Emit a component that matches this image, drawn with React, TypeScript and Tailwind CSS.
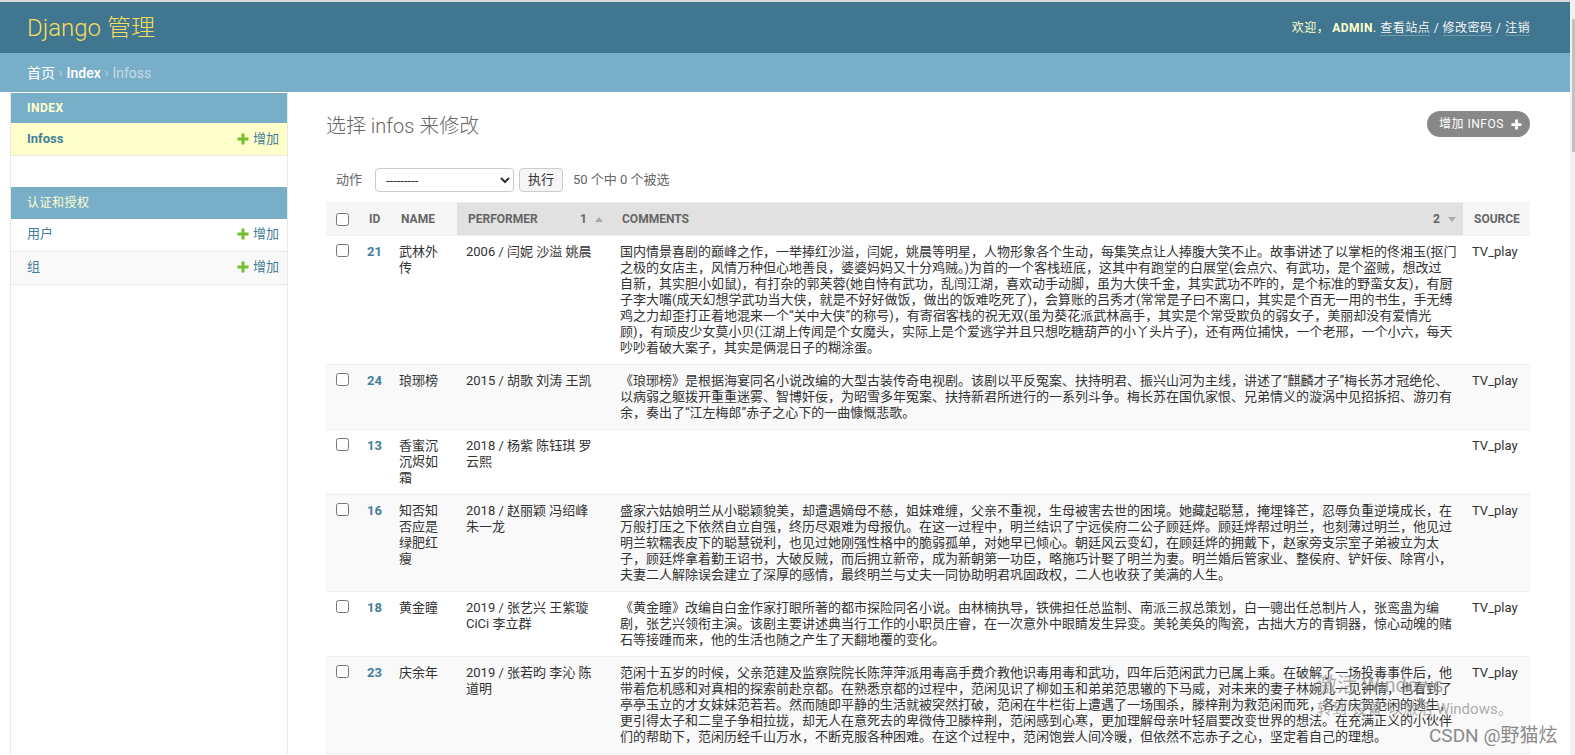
const shows = [
  {
    id: 21,
    name: '武林外传',
    performer: '2006 / 闫妮 沙溢 姚晨',
    comments: [
      '国内情景喜剧的巅峰之作，一举捧红沙溢，闫妮，姚晨等明星，人物形象各个生动，每集笑点让人捧腹大笑不止。故事讲述了以掌柜的佟湘玉(抠门',
      '之极的女店主，风情万种但心地善良，婆婆妈妈又十分鸡贼。)为首的一个客栈班底，这其中有跑堂的白展堂(会点穴、有武功，是个盗贼，想改过',
      '自新，其实胆小如鼠)，有打杂的郭芙蓉(她自恃有武功，乱闯江湖，喜欢动手动脚，虽为大侠千金，其实武功不咋的，是个标准的野蛮女友)，有厨',
      '子李大嘴(成天幻想学武功当大侠，就是不好好做饭，做出的饭难吃死了)，会算账的吕秀才(常常是子曰不离口，其实是个百无一用的书生，手无缚',
      '鸡之力却歪打正着地混来一个“关中大侠”的称号)，有寄宿客栈的祝无双(虽为葵花派武林高手，其实是个常受欺负的弱女子，美丽却没有爱情光',
      '顾)，有顽皮少女莫小贝(江湖上传闻是个女魔头，实际上是个爱逃学并且只想吃糖葫芦的小丫头片子)，还有两位捕快，一个老邢，一个小六，每天',
      '吵吵着破大案子，其实是俩混日子的糊涂蛋。',
    ],
  },
  {
    id: 24,
    name: '琅琊榜',
    performer: '2015 / 胡歌 刘涛 王凯',
    comments: [
      '《琅琊榜》是根据海宴同名小说改编的大型古装传奇电视剧。该剧以平反冤案、扶持明君、振兴山河为主线，讲述了“麒麟才子”梅长苏才冠绝伦、',
      '以病弱之躯拨开重重迷雾、智博奸佞，为昭雪多年冤案、扶持新君所进行的一系列斗争。梅长苏在国仇家恨、兄弟情义的漩涡中见招拆招、游刃有',
      '余，奏出了“江左梅郎”赤子之心下的一曲慷慨悲歌。',
    ],
  },
  { id: 13, name: '香蜜沉沉烬如霜', performer: '2018 / 杨紫 陈钰琪 罗云熙', comments: [] },
  {
    id: 16,
    name: '知否知否应是绿肥红瘦',
    performer: '2018 / 赵丽颖 冯绍峰 朱一龙',
    comments: [
      '盛家六姑娘明兰从小聪颖貌美，却遭遇嫡母不慈，姐妹难缠，父亲不重视，生母被害去世的困境。她藏起聪慧，掩埋锋芒，忍辱负重逆境成长，在',
      '万般打压之下依然自立自强，终历尽艰难为母报仇。在这一过程中，明兰结识了宁远侯府二公子顾廷烨。顾廷烨帮过明兰，也刻薄过明兰，他见过',
      '明兰软糯表皮下的聪慧锐利，也见过她刚强性格中的脆弱孤单，对她早已倾心。朝廷风云变幻，在顾廷烨的拥戴下，赵家旁支宗室子弟被立为太',
      '子，顾廷烨拿着勤王诏书，大破反贼，而后拥立新帝，成为新朝第一功臣，略施巧计娶了明兰为妻。明兰婚后管家业、整侯府、铲奸佞、除宵小，',
      '夫妻二人解除误会建立了深厚的感情，最终明兰与丈夫一同协助明君巩固政权，二人也收获了美满的人生。',
    ],
  },
  {
    id: 18,
    name: '黄金瞳',
    performer: '2019 / 张艺兴 王紫璇 CiCi 李立群',
    comments: [
      '《黄金瞳》改编自白金作家打眼所著的都市探险同名小说。由林楠执导，铁佛担任总监制、南派三叔总策划，白一骢出任总制片人，张鸾蛊为编',
      '剧，张艺兴领衔主演。该剧主要讲述典当行工作的小职员庄睿，在一次意外中眼睛发生异变。美轮美奂的陶瓷，古拙大方的青铜器，惊心动魄的赌',
      '石等接踵而来，他的生活也随之产生了天翻地覆的变化。',
    ],
  },
  {
    id: 23,
    name: '庆余年',
    performer: '2019 / 张若昀 李沁 陈道明',
    comments: [
      '范闲十五岁的时候，父亲范建及监察院院长陈萍萍派用毒高手费介教他识毒用毒和武功，四年后范闲武力已属上乘。在破解了一场投毒事件后，他',
      '带着危机感和对真相的探索前赴京都。在熟悉京都的过程中，范闲见识了柳如玉和弟弟范思辙的下马威，对未来的妻子林婉儿一见钟情，也看到了',
      '亭亭玉立的才女妹妹范若若。然而随即平静的生活就被突然打破，范闲在牛栏街上遭遇了一场围杀，滕梓荆为救范闲而死，各方庆贺范闲的逃生，',
      '更引得太子和二皇子争相拉拢，却无人在意死去的卑微侍卫滕梓荆，范闲感到心寒，更加理解母亲叶轻眉要改变世界的想法。在充满正义的小伙伴',
      '们的帮助下，范闲历经千山万水，不断克服各种困难。在这个过程中，范闲饱尝人间冷暖，但依然不忘赤子之心，坚定着自己的理想。',
    ],
  },
]

function PlusIcon({ className }: { className: string }) {
  return (
    <svg viewBox="0 0 12 12" className={className} fill="currentColor">
      <path d="M4.5 0.5h3v4h4v3h-4v4h-3v-4h-4v-3h4z" />
    </svg>
  )
}

function SidebarRow({ label, bold, bg, lift }: { label: string; bold?: boolean; bg: string; lift: string }) {
  return (
    <div className={`flex h-[33px] items-center justify-between border-b border-[#e8e8e8] pr-2 pl-4 ${lift} ${bg}`}>
      <span className={`text-[#447e9b] ${bold ? 'font-bold' : ''}`}>{label}</span>
      <span className="flex items-center gap-1 text-[#447e9b]">
        <PlusIcon className="h-3 w-3 text-[#70bf2b]" />
        增加
      </span>
    </div>
  )
}

function SortHeader({ label, order, up, inset }: { label: string; order: string; up?: boolean; inset: string }) {
  return (
    <th className="bg-[#e1e1e1] p-0 text-left align-middle">
      <div className={`flex items-center justify-between pr-[7px] ${inset}`}>
        <span>{label}</span>
        <span className="flex items-center gap-2">
          {order}
          <svg viewBox="0 0 8 5" className="h-[5px] w-2 text-[#aaaaaa]" fill="currentColor">
            <path d={up ? 'M4 0l4 5H0z' : 'M0 0h8L4 5z'} />
          </svg>
        </span>
      </div>
    </th>
  )
}

export default function App() {
  return (
    <div className="relative flex h-[755px] w-[1575px] overflow-hidden bg-white font-['Roboto','Noto_Sans_CJK_SC',sans-serif] text-[13px] leading-4 text-[#333333]">
      <div className="min-w-0 flex-1">
        <div className="h-[2px] bg-[#d8d8d8]" />
        {/* Header */}
        <header className="flex h-[51px] items-center justify-between bg-[#417690] pr-10 pl-[27px]">
          <h1 className="text-2xl leading-none font-light text-[#f5dd5d]">Django 管理</h1>
          <div className="text-xs tracking-[0.5px] text-[#ffffcc]">
            <span>欢迎，</span>
            <strong className="ml-[3px] font-bold">ADMIN</strong>
            <span>. </span>
            <a className="border-b border-white/25 text-[#f5f5f5]">查看站点</a>
            <span className="text-[#f5f5f5]"> / </span>
            <a className="border-b border-white/25 text-[#f5f5f5]">修改密码</a>
            <span className="text-[#f5f5f5]"> / </span>
            <a className="border-b border-white/25 text-[#f5f5f5]">注销</a>
          </div>
        </header>
        <div className="flex h-[39px] items-center bg-[#79aec8] pl-[27px] text-sm text-[#c4dce8]">
          <a className="text-white">首页</a>
          <span className="mx-1 text-xs">›</span>
          <a className="font-medium text-white">Index</a>
          <span className="mx-1 text-xs">›</span>
          <span>Infoss</span>
        </div>

        <div className="flex h-[662px] pl-[10px]">
          {/* Sidebar */}
          <aside className="w-[278px] shrink-0 border-x border-[#e8e8e8] pt-[1px]">
            <div className="flex h-[30px] items-center bg-[#79aec8] pl-4 text-xs font-bold tracking-[0.5px] text-[#ffffcc]">INDEX</div>
            <SidebarRow label="Infoss" bold bg="bg-[#ffffcc]" lift="pb-[1px]" />
            <div className="mt-[31px] flex h-[32px] items-center bg-[#79aec8] pl-4 text-xs tracking-[0.5px] text-[#ffffcc]">认证和授权</div>
            <SidebarRow label="用户" bg="bg-white" lift="pb-[3px]" />
            <SidebarRow label="组" bg="bg-[#f9f9f9]" lift="pb-[3px]" />
          </aside>

          {/* Content */}
          <main className="min-w-0 flex-1 pr-10 pl-[38px]">
            <div className="flex h-[76px] items-start justify-between pt-[19px]">
              <h2 className="mt-[3px] text-xl leading-6 font-light text-[#666666]">选择 infos 来修改</h2>
              <a className="flex h-[26px] w-[103px] items-center gap-[7px] rounded-[15px] bg-[#888888] pl-[12px] text-xs tracking-[0.5px] text-white">
                增加 INFOS
                <PlusIcon className="h-[11px] w-[11px]" />
              </a>
            </div>

            <div className="flex h-[34px] items-start text-[#666666]">
              <span className="mt-1 ml-[10px] w-[39px]">动作</span>
              <select className="h-6 w-[139px] rounded border border-[#cccccc] bg-white pl-[6px] text-[13px] text-[#333333]">
                <option>---------</option>
              </select>
              <button className="ml-[5px] h-6 w-[44px] rounded border border-[#cccccc] bg-[#f6f6f6] text-[#333333]">执行</button>
              <span className="mt-1 ml-[10px]">50 个中 0 个被选</span>
            </div>

            <table className="w-[1204px] table-fixed border-collapse">
              <colgroup>
                <col className="w-[31px]" />
                <col className="w-[32px]" />
                <col className="w-[68px]" />
                <col className="w-[153px]" />
                <col className="w-[853px]" />
                <col className="w-[67px]" />
              </colgroup>
              <thead className="text-xs font-bold text-[#666666]">
                <tr className="h-[33px] border-y border-[#eeeeee] bg-[#f6f6f6]">
                  <th className="p-0 pl-[10px] text-left align-middle">
                    <input type="checkbox" className="block h-[13px] w-[13px]" />
                  </th>
                  <th className="p-0 pl-3 text-left">ID</th>
                  <th className="p-0 pl-3 text-left">NAME</th>
                  <SortHeader label="PERFORMER" order="1" up inset="pl-[11px]" />
                  <SortHeader label="COMMENTS" order="2" inset="pl-3" />
                  <th className="p-0 pl-[11px] text-left">SOURCE</th>
                </tr>
              </thead>
              <tbody>
                {shows.map((show, i) => (
                  <tr key={show.id} className={`border-b border-[#eeeeee] align-top ${i % 2 ? 'bg-[#f9f9f9]' : 'bg-white'}`}>
                    <td className="py-2 pl-[10px]">
                      <input type="checkbox" className="block h-[13px] w-[13px]" />
                    </td>
                    <td className="py-2 pl-[10px] font-bold text-[#447e9b]">{show.id}</td>
                    <td className="px-[10px] py-2">{show.name}</td>
                    <td className="py-2 pr-[10px] pl-[9px]">{show.performer}</td>
                    <td className="py-2 pl-[10px] whitespace-nowrap">
                      {show.comments.map((line) => (
                        <div key={line}>{line}</div>
                      ))}
                    </td>
                    <td className="py-2 pl-[9px] whitespace-nowrap">TV_play</td>
                  </tr>
                ))}
              </tbody>
            </table>
          </main>
        </div>
      </div>

      {/* Scrollbar */}
      <div className="w-[5px] shrink-0 bg-[#f1f1f1] pt-[19px] pl-[2px]">
        <div className="h-[133px] w-[3px] bg-[#c1c1c1]" />
      </div>

      {/* Sidebar toggle, mostly cut off at the window edge */}
      <span className="absolute top-[462px] left-[-6px] text-[13px] text-[#447e9b]">«</span>

      {/* Watermarks over the page */}
      <div className="pointer-events-none absolute top-[673px] left-[1317px] text-[#888888]/70">
        <div className="text-xl leading-6">激活 Windows</div>
        <div className="mt-[2px] text-[15px] leading-5">转到“设置”以激活 Windows。</div>
      </div>
      <div className="pointer-events-none absolute top-[725px] left-[1429px] text-[19px] leading-[22px] whitespace-nowrap text-[#8a8a8a]">CSDN @野猫炫</div>
    </div>
  )
}
